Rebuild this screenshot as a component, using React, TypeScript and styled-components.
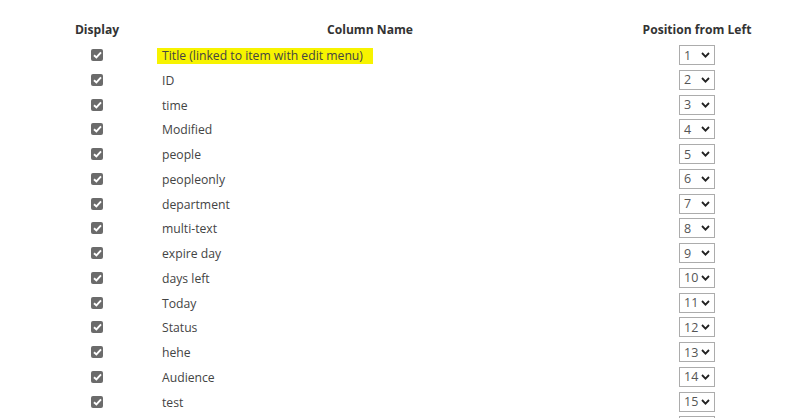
import React from "react";
import styled, { createGlobalStyle } from "styled-components";

const GlobalStyle = createGlobalStyle`
  html, body {
    margin: 0;
    padding: 0;
    background: #ffffff;
    overflow: hidden;
  }
  body {
    font-family: "Open Sans", "Noto Sans", sans-serif;
    color: #444;
  }
`;

const Page = styled.div`
  width: 800px;
  height: 418px;
  overflow: hidden;
  padding: 18px 0 0 57px;
  box-sizing: border-box;
`;

const Grid = styled.div`
  display: grid;
  grid-template-columns: 80px 465px 190px;
  grid-auto-rows: 24.75px;
`;

const HeadCell = styled.div<{ $left?: boolean }>`
  height: 23.4px;
  align-self: start;
  display: flex;
  align-items: center;
  justify-content: center;
  font-weight: 700;
  font-size: 12.1px;
  color: #333;
  padding: ${({ $left }) => ($left ? "0 24px 0 25px" : "0")};
`;

const Cell = styled.div`
  display: flex;
  align-items: center;
  justify-content: center;
`;

const NameCell = styled.div`
  display: flex;
  align-items: center;
  padding-left: 25px;
  font-size: 12.2px;
  color: #444;
`;

const Highlight = styled.span<{ $on?: boolean }>`
  background: ${({ $on }) => ($on ? "#f7f300" : "transparent")};
  padding: ${({ $on }) => ($on ? "0 10px 0 5px" : "0")};
  margin-left: ${({ $on }) => ($on ? "-5px" : "0")};
  line-height: 16px;
  margin-top: 2px;
`;

const Check = styled.span`
  width: 12px;
  height: 12px;
  border-radius: 2px;
  background: #6b6b6b;
  display: flex;
  align-items: center;
  justify-content: center;
`;

const Select = styled.div`
  width: 36px;
  height: 20px;
  box-sizing: border-box;
  border: 1px solid #acacac;
  display: flex;
  align-items: center;
  justify-content: space-between;
  padding: 0 4px 0 4px;
  font-size: 12.5px;
  color: #555;
`;

const columns = [
  "Title (linked to item with edit menu)",
  "ID",
  "time",
  "Modified",
  "people",
  "peopleonly",
  "department",
  "multi-text",
  "expire day",
  "days left",
  "Today",
  "Status",
  "hehe",
  "Audience",
  "test",
  "",
];

const CheckMark = () => (
  <svg width="9" height="8" viewBox="0 0 9 8">
    <path d="M1 4.2 L3.4 6.5 L8 1.3" fill="none" stroke="#fff" strokeWidth="1.9" />
  </svg>
);

const Chevron = () => (
  <svg width="9" height="6" viewBox="0 0 9 6">
    <path d="M1 1 L4.5 4.6 L8 1" fill="none" stroke="#222" strokeWidth="1.8" />
  </svg>
);

const App: React.FC = () => {
  return (
    <>
      <GlobalStyle />
      <Page>
        <Grid>
          <HeadCell>Display</HeadCell>
          <HeadCell $left>Column Name</HeadCell>
          <HeadCell>Position from Left</HeadCell>
          {columns.map((name, i) => (
            <React.Fragment key={i}>
              <Cell>
                <Check>
                  <CheckMark />
                </Check>
              </Cell>
              <NameCell>
                <Highlight $on={i === 0}>{name}</Highlight>
              </NameCell>
              <Cell>
                <Select>
                  <span>{i + 1}</span>
                  <Chevron />
                </Select>
              </Cell>
            </React.Fragment>
          ))}
        </Grid>
      </Page>
    </>
  );
};

export default App;
